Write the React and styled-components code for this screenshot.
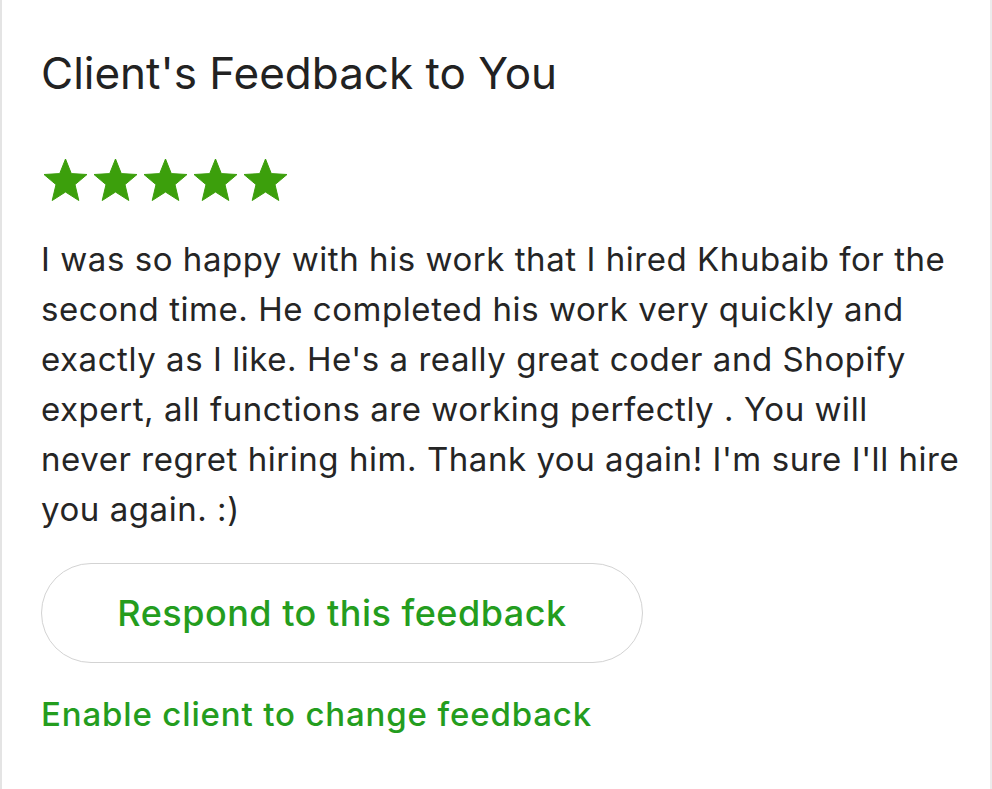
import styled, { createGlobalStyle } from "styled-components";

const GlobalStyle = createGlobalStyle`
    html, body {
        margin: 0;
        padding: 0;
        background: #ffffff;
    }
    body {
        font-family: Inter, "Liberation Sans", Arial, sans-serif;
    }
`;

const Card = styled.div`
    box-sizing: border-box;
    width: 992px;
    min-height: 789px;
    margin: 0 auto;
    background-color: white;
    border-left: 2px solid #e4e4e4;
    border-right: 2px solid #ececec;
    padding: 46px 20px 0 39px;
`;
const Title = styled.h2`
    margin: 0;
    font-size: 44px;
    font-weight: 400;
    color: #222222;
    line-height: 54px;
`;
const Stars = styled.div`
    display: flex;
    gap: 5px;
    margin-top: 58px;
    padding-left: 2px;
`;
const Comment = styled.p`
    margin: 32px 0 0;
    font-size: 33px;
    line-height: 50px;
    letter-spacing: 0.55px;
    color: #252525;
    max-width: 920px;
`;
const RespondButton = styled.button`
    display: flex;
    align-items: center;
    justify-content: center;
    box-sizing: border-box;
    width: 602px;
    height: 100px;
    margin-top: 29px;
    border: 1.5px solid #d3d3d3;
    border-radius: 50px;
    background: white;
    color: ${(props) => props.color};
    font-family: inherit;
    font-size: 36px;
    font-weight: 500;
    letter-spacing: 0.5px;
    cursor: pointer;
`;
const Link = styled.a`
    display: block;
    margin-top: 31px;
    font-size: 33px;
    font-weight: 500;
    letter-spacing: 0.85px;
    color: #249d1e;
    text-decoration: none;
`;

function Star() {
    return (
        <svg width="45" height="44" viewBox="0 0 45 44">
            <path
                d="M22.5 1 L28.3 15.6 L44 16.5 L32 26.6 L35.8 42.5 L22.5 34 L9.2 42.5 L13 26.6 L1 16.5 L16.7 15.6 Z"
                fill="#3c9f0c"
                stroke="#3c9f0c"
                strokeWidth="1"
                strokeLinejoin="round"
            />
        </svg>
    );
}

function App() {
    return (
        <>
            <GlobalStyle />
            <Card>
                <Title>Client's Feedback to You</Title>
                <Stars>
                    {[0, 1, 2, 3, 4].map((i) => (
                        <Star key={i} />
                    ))}
                </Stars>
                <Comment>
                    I was so happy with his work that I hired Khubaib for the
                    second time. He completed his work very quickly and
                    exactly as I like. He's a really great coder and Shopify
                    expert, all functions are working perfectly . You will
                    never regret hiring him. Thank you again! I'm sure I'll
                    hire you again. :)
                </Comment>
                <RespondButton color="#249d1e">Respond to this feedback</RespondButton>
                <Link href="#">Enable client to change feedback</Link>
            </Card>
        </>
    );
}

export default App;
